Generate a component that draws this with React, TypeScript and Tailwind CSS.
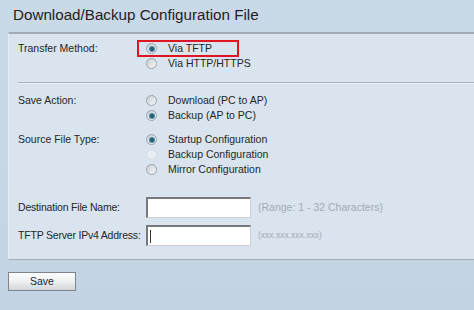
import React from 'react';

const font = { fontFamily: '"Liberation Sans", Arial, sans-serif' };

const Radio = ({ checked, faded }: { checked?: boolean; faded?: boolean }) => (
  <span
    className={`relative inline-block w-[11px] h-[11px] rounded-full border ${
      faded ? 'border-[#d4dbe2] bg-[#e8edf2]' : 'border-[#9aa2aa] bg-gradient-to-br from-[#c9ced3] to-[#f7f8f9]'
    }`}
  >
    {checked && <span className="absolute left-[2.5px] top-[2.5px] w-[4px] h-[4px] rounded-full bg-[#1f5f78] ring-1 ring-[#4d8aa2]" />}
  </span>
);

const Option = ({ label, checked, faded }: { label: string; checked?: boolean; faded?: boolean }) => (
  <div className="flex items-center h-[15px]">
    <div className="w-[22px] flex items-center">
      <Radio checked={checked} faded={faded} />
    </div>
    <span className="text-[10.5px] text-[#262626] whitespace-nowrap">{label}</span>
  </div>
);

const Row = ({ label, children, className = '' }: { label: string; children: React.ReactNode; className?: string }) => (
  <div className={`flex ${className}`}>
    <div className="w-[128px] shrink-0 h-[15px] flex items-center text-[10.5px] text-[#262626] whitespace-nowrap">{label}</div>
    <div className="flex flex-col">{children}</div>
  </div>
);

const Field = ({ label, hint, small, cursor }: { label: string; hint: string; small?: boolean; cursor?: boolean }) => (
  <div className="flex items-center h-[21px]">
    <div className="w-[128px] shrink-0 text-[10.5px] text-[#262626] whitespace-nowrap tracking-[-0.2px]">{label}</div>
    <div className="relative w-[105px] h-[21px] shrink-0 bg-white border-t-2 border-l-2 border-t-[#77797c] border-l-[#77797c] border-b border-r border-b-[#c9ced4] border-r-[#c9ced4]">
      {cursor && <span className="absolute left-[2px] top-[3px] w-[1px] h-[13px] bg-[#333]" />}
    </div>
    <span className={`ml-[7px] text-[#a3abb3] whitespace-nowrap ${small ? 'text-[8.5px]' : 'text-[10.5px]'}`}>{hint}</span>
  </div>
);

export default function App() {
  return (
    <div className="w-[474px] h-[310px] bg-gradient-to-b from-[#c9d9e7] to-[#c2d4e4] overflow-hidden" style={font}>
      <h1 className="h-[32px] pl-[13px] pt-[4px] text-[15.2px] leading-[22px] text-[#222] font-normal">
        Download/Backup Configuration File
      </h1>
      <div className="ml-[8px] h-[228px] bg-[#d9e4ef] border-t-2 border-t-[#a3abb3] border-b border-b-[#a3abb3] border-l border-l-[#e4ecf3] pl-[9px] pt-[7px]">
        <div className="relative">
          <Row label="Transfer Method:">
            <Option label="Via TFTP" checked />
            <Option label="Via HTTP/HTTPS" />
          </Row>
          <div className="absolute left-[119px] top-[-1px] w-[102px] h-[17px] border-2 border-[#e0151f]" />
        </div>
        <div className="mt-[11px] h-[2px] bg-[#a9b1b9] border-b border-b-[#eef3f7]" />
        <Row label="Save Action:" className="mt-[9px]">
          <Option label="Download (PC to AP)" />
          <Option label="Backup (AP to PC)" checked />
        </Row>
        <Row label="Source File Type:" className="mt-[9px]">
          <Option label="Startup Configuration" checked />
          <Option label="Backup Configuration" faded />
          <Option label="Mirror Configuration" />
        </Row>
        <div className="mt-[20px] flex flex-col gap-[7px]">
          <Field label="Destination File Name:" hint="(Range: 1 - 32 Characters)" />
          <Field label="TFTP Server IPv4 Address:" hint="(xxx.xxx.xxx.xxx)" small cursor />
        </div>
      </div>
      <div className="pl-[8px] pt-[8px]">
        <button className="w-[68px] h-[19px] border border-[#7d858c] bg-gradient-to-b from-[#fbfcfc] via-[#eef0f1] to-[#d3d7da] text-[10.5px] text-[#222] leading-none">
          Save
        </button>
      </div>
    </div>
  );
}
